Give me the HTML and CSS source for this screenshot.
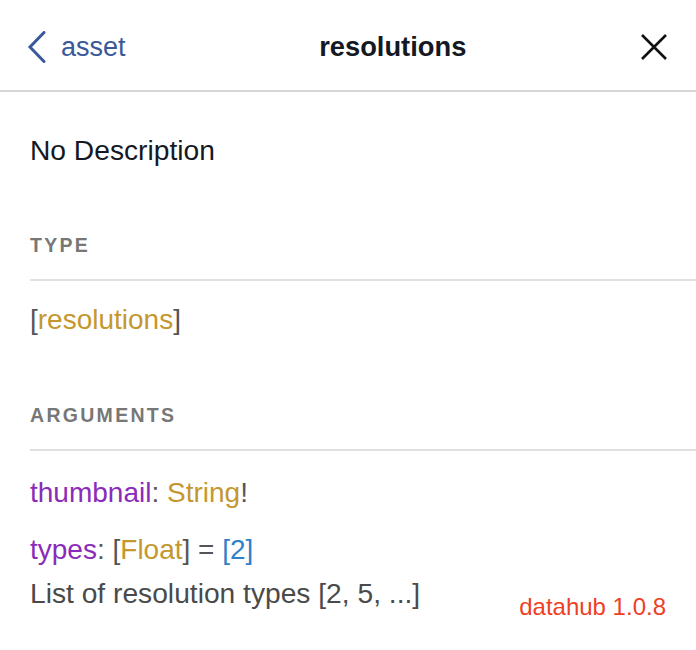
FILE: index.html
```html
<!DOCTYPE html>
<html>
<head>
<meta charset="utf-8">
<link rel="stylesheet" href="styles.css">
</head>
<body>
<div class="explorer">
  <header class="bar">
    <a class="back">
      <svg class="chev" width="20" height="32" viewBox="0 0 20 32"><path d="M17 1.5 L3 16 L17 30.5" fill="none" stroke="#3b5998" stroke-width="3" stroke-linecap="round" stroke-linejoin="miter"/></svg>
      <span class="back-label">asset</span>
    </a>
    <div class="title">resolutions</div>
    <div class="close">
      <svg width="28" height="28" viewBox="0 0 28 28"><path d="M2 2 L26 26 M26 2 L2 26" fill="none" stroke="#111" stroke-width="2.6"/></svg>
    </div>
  </header>
  <main class="contents">
    <p class="desc">No Description</p>
    <section class="category">
      <div class="cat-title">TYPE</div>
      <div class="item"><span class="punct">[</span><span class="type-name">resolutions</span><span class="punct">]</span></div>
    </section>
    <section class="category">
      <div class="cat-title">ARGUMENTS</div>
      <div class="item arg"><span class="arg-name">thumbnail</span><span class="punct">: </span><span class="type-name">String</span><span class="punct">!</span></div>
      <div class="item arg second"><span class="arg-name">types</span><span class="punct">: [</span><span class="type-name">Float</span><span class="punct">] = </span><span class="default">[2]</span></div>
      <div class="arg-desc">List of resolution types [2, 5, ...]</div>
    </section>
  </main>
  <div class="version">datahub 1.0.8</div>
</div>
</body>
</html>
```
FILE: styles.css
```css
html, body {
  margin: 0;
  padding: 0;
  background: #fff;
}
body {
  font-family: "Liberation Sans", Arial, sans-serif;
  color: #141823;
}
.explorer {
  position: relative;
  width: 696px;
  height: 650px;
  overflow: hidden;
}
.bar {
  height: 86px;
  padding: 4px 28px 0 27px;
  border-bottom: 2px solid #d6d6d6;
  display: flex;
  align-items: center;
}
.back {
  display: flex;
  align-items: center;
  color: #3b5998;
  font-size: 27px;
  text-decoration: none;
}
.chev {
  display: block;
  margin-right: 14px;
}
.back-label {
  line-height: 32px;
}
.title {
  flex: 1;
  text-align: center;
  font-size: 27.3px;
  font-weight: bold;
  padding-left: 20px;
  color: #141823;
}
.close svg {
  display: block;
}
.contents {
  padding: 0 0 0 30px;
}
.desc {
  margin: 39px 0 0;
  font-size: 28.2px;
  line-height: 38px;
}
.category {
  margin-top: 64px;
}
.cat-title {
  font-size: 19.5px;
  font-weight: bold;
  letter-spacing: 2.3px;
  color: #777;
  line-height: 24px;
  padding-bottom: 22px;
  border-bottom: 2px solid #e0e0e0;
}
.item {
  margin-top: 20px;
  font-size: 28px;
  line-height: 38px;
}
.item.arg {
  margin-top: 23px;
}
.item.arg.second {
  margin-top: 19px;
}
.arg-desc {
  margin-top: 5px;
  font-size: 28.2px;
  line-height: 38px;
  color: #4a4a4a;
}
.punct {
  color: #555;
}
.type-name {
  color: #c4982e;
}
.arg-name {
  color: #8b2bb9;
}
.default {
  color: #2f7fcb;
}
.version {
  position: absolute;
  right: 30px;
  top: 593px;
  font-size: 24px;
  line-height: 28px;
  color: #ee3f25;
}
```
